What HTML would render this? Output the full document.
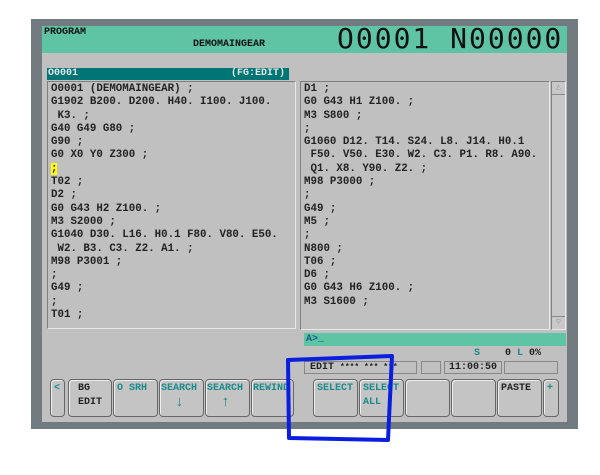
<!DOCTYPE html><html><head><style>
body{margin:0;width:600px;height:475px;background:#fff;position:relative;overflow:hidden;font-family:"Liberation Mono",monospace;font-weight:bold}
div{position:absolute;box-sizing:border-box}
.frame{left:31px;top:19px;width:547px;height:410px;background:#717b80}
.screen{left:42px;top:26px;width:525px;height:396px;background:#c0c0c0}
.hdr{left:42px;top:26px;width:525px;height:27px;background:#5ec4a3}
.box{background:#c0c0c0;border:1px solid #e8e8e8;border-top-color:#808080;border-left-color:#808080}
pre{margin:0;font:bold 10.8px/13.3px "Liberation Mono",monospace;color:#222;position:absolute;left:3px;top:1px}
.key{top:379px;height:38px;background:#c4c4c4;border:1px solid #666;border-radius:4px;font-size:10px;color:#1a8a8a;padding:2px 3px;line-height:14px;box-shadow:inset 1px 1px 0 #eee}
.arr{font-size:15px;display:inline-block;margin-left:14px}
</style></head><body>
<div class="frame"></div>
<div class="screen"></div>
<div class="hdr"></div>
<div style="left:44px;top:27px;font-size:10px;color:#111">PROGRAM</div>
<div style="left:193px;top:39px;font-size:10px;color:#111">DEMOMAINGEAR</div>
<div style="left:337px;top:24px;font:28px/30px 'DejaVu Sans Mono',monospace;color:#111;letter-spacing:2px">O0001 N00000</div>
<div style="left:47px;top:68px;width:242px;height:12px;background:#007575;color:#e8e8e8;font-size:10px;line-height:12px;padding-left:1px">O0001<span style="position:absolute;right:4px">(FG:EDIT)</span></div>
<div class="box" style="left:47px;top:81px;width:249px;height:248px"><pre>O0001 (DEMOMAINGEAR) ;
G1902 B200. D200. H40. I100. J100.
 K3. ;
G40 G49 G80 ;
G90 ;
G0 X0 Y0 Z300 ;
<span style="background:#ff0">;</span>
T02 ;
D2 ;
G0 G43 H2 Z100. ;
M3 S2000 ;
G1040 D30. L16. H0.1 F80. V80. E50.
 W2. B3. C3. Z2. A1. ;
M98 P3001 ;
;
G49 ;
;
T01 ;</pre></div>
<div class="box" style="left:300px;top:81px;width:250px;height:249px"><pre>D1 ;
G0 G43 H1 Z100. ;
M3 S800 ;
;
G1060 D12. T14. S24. L8. J14. H0.1
 F50. V50. E30. W2. C3. P1. R8. A90.
 Q1. X8. Y90. Z2. ;
M98 P3000 ;
;
G49 ;
M5 ;
;
N800 ;
T06 ;
D6 ;
G0 G43 H6 Z100. ;
M3 S1600 ;</pre></div>
<div class="box" style="left:551px;top:81px;width:15px;height:249px;background:#c8c8c8"></div>
<div style="left:552px;top:82px;width:13px;height:13px;border-bottom:1px solid #888;color:#999;font-size:8px;text-align:center">△</div>
<div style="left:552px;top:316px;width:13px;height:13px;border-top:1px solid #888;color:#999;font-size:8px;text-align:center">▽</div>
<div style="left:304px;top:333px;width:262px;height:13px;background:#5ec4a3;font-size:10px;color:#1a5a8a;line-height:13px;padding-left:2px">A&gt;_</div>
<div style="left:474px;top:348px;font-size:10px;color:#1a8a8a">S</div>
<div style="left:505px;top:348px;font-size:10px;color:#222">0 <span style="color:#1a8a8a">L</span>  0%</div>
<div class="box" style="left:304px;top:361px;width:113px;height:13px;font-size:10px;line-height:12px;color:#222;padding-left:5px;border:1px solid #888">EDIT <span style="font-size:8px">**** *** ***</span></div>
<div class="box" style="left:421px;top:361px;width:20px;height:13px;border:1px solid #888"></div>
<div class="box" style="left:444px;top:361px;width:58px;height:13px;font-size:10px;line-height:12px;color:#222;padding-left:4px;border:1px solid #888">11:00:50</div>
<div class="box" style="left:504px;top:361px;width:54px;height:13px;border:1px solid #888"></div>
<div class="key" style="left:50px;width:15px;">&lt;</div>
<div class="key" style="left:68px;width:44px;color:#222">&nbsp;BG<br>&nbsp;EDIT</div>
<div class="key" style="left:113px;width:45px">O SRH</div>
<div class="key" style="left:159px;width:45px;padding:2px 1px">SEARCH<br><span class="arr">↓</span></div>
<div class="key" style="left:205px;width:45px;padding:2px 1px">SEARCH<br><span class="arr">↑</span></div>
<div class="key" style="left:251px;width:43px;padding:2px 1px">REWIND</div>
<div class="key" style="left:313px;width:45px">SELECT</div>
<div class="key" style="left:359px;width:45px">SELECT<br>ALL</div>
<div class="key" style="left:405px;width:45px"></div>
<div class="key" style="left:451px;width:45px"></div>
<div class="key" style="left:497px;width:45px;color:#222">PASTE</div>
<div class="key" style="left:543px;width:16px">+</div>
<svg style="position:absolute;left:0;top:0" width="600" height="475"><path d="M288 360 L392 356 L388 440 L289 438 Z" fill="none" stroke="#0a1ee0" stroke-width="4" stroke-linejoin="round"/></svg>
</body></html>
